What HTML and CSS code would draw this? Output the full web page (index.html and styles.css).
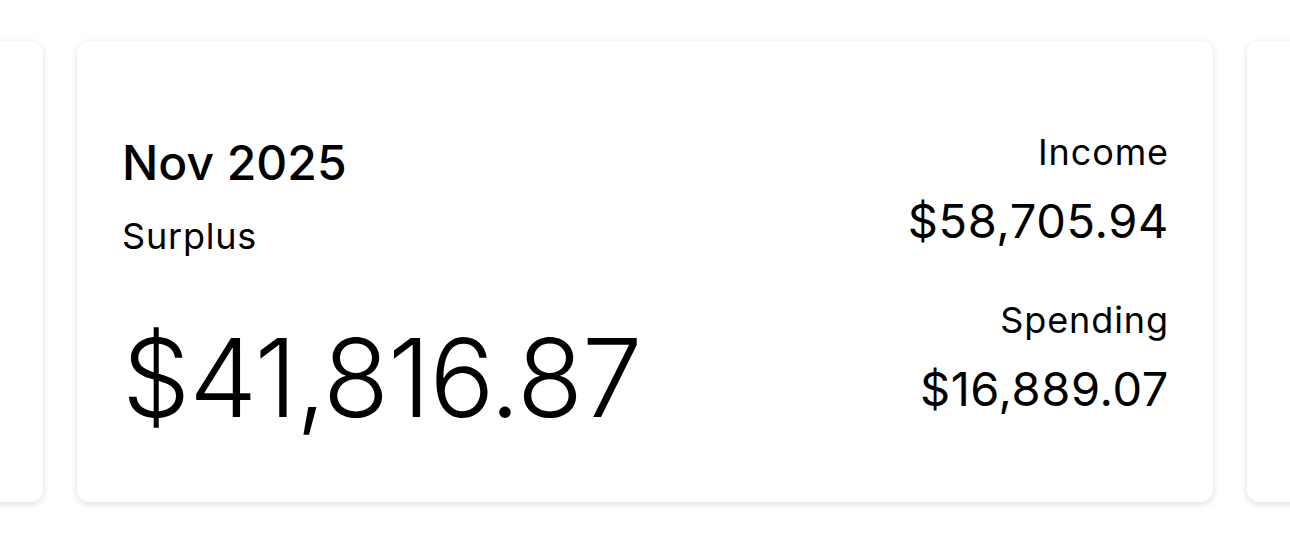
FILE: index.html
```html
<!DOCTYPE html>
<html lang="en">

<head>
    <meta charset="UTF-8">
    <meta name="viewport" content="width=device-width, initial-scale=1.0">
    <title>Monthly summary</title>
    <link rel="stylesheet" href="styles.css">
</head>

<body>
    <div class="track">
        <div class="card"></div>
        <div class="card">
            <div class="main">
                <div class="month">Nov 2025</div>
                <div class="kind">Surplus</div>
                <div class="total">$41,816.87</div>
            </div>
            <div class="side">
                <div class="label">Income</div>
                <div class="value">$58,705.94</div>
                <div class="label gap">Spending</div>
                <div class="value">$16,889.07</div>
            </div>
        </div>
        <div class="card"></div>
    </div>
</body>

</html>
```

FILE: styles.css
```css
* {
    margin: 0;
    padding: 0;
    box-sizing: border-box;
}

body {
    background-color: #fff;
    font-family: Inter, "Noto Sans", sans-serif;
    color: #000;
    height: 559px;
    overflow: hidden;
}

.track {
    display: flex;
    justify-content: center;
    gap: 34px;
    padding: 41px 0 20px;
    overflow: hidden;
}

.card {
    flex-shrink: 0;
    width: 1136px;
    height: 461px;
    background-color: #fff;
    border-radius: 12px;
    box-shadow: 0 2px 7px rgba(0, 0, 0, 0.14);
    display: flex;
    justify-content: space-between;
    align-items: flex-start;
    padding: 0 44px 0 45px;
}

.main {
    display: flex;
    flex-direction: column;
    margin-top: 98px;
}

.month {
    font-size: 48px;
    font-weight: 500;
    line-height: 1;
}

.kind {
    font-size: 36px;
    line-height: 1;
    margin-top: 31px;
    letter-spacing: 0.8px;
}

.total {
    font-size: 108px;
    font-weight: 300;
    line-height: 1;
    margin-top: 70px;
    letter-spacing: -1px;
}

.side {
    display: flex;
    flex-direction: column;
    align-items: flex-end;
    margin-top: 93px;
}

.label {
    font-size: 36px;
    line-height: 1;
    letter-spacing: 0.9px;
}

.label.gap {
    margin-top: 58px;
}

.value {
    font-size: 47px;
    line-height: 1;
    margin-top: 27px;
    letter-spacing: 0.6px;
}
```
